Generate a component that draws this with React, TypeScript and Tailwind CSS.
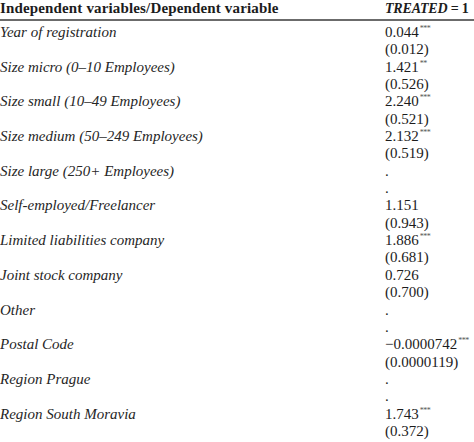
import React from 'react';

type Row = { label: string; coef: string; stars?: string; se?: string };

const rows: Row[] = [
  { label: 'Year of registration', coef: '0.044', stars: '***', se: '(0.012)' },
  { label: 'Size micro (0–10 Employees)', coef: '1.421', stars: '**', se: '(0.526)' },
  { label: 'Size small (10–49 Employees)', coef: '2.240', stars: '***', se: '(0.521)' },
  { label: 'Size medium (50–249 Employees)', coef: '2.132', stars: '***', se: '(0.519)' },
  { label: 'Size large (250+ Employees)', coef: '.', se: '.' },
  { label: 'Self-employed/Freelancer', coef: '1.151', se: '(0.943)' },
  { label: 'Limited liabilities company', coef: '1.886', stars: '***', se: '(0.681)' },
  { label: 'Joint stock company', coef: '0.726', se: '(0.700)' },
  { label: 'Other', coef: '.', se: '.' },
  { label: 'Postal Code', coef: '−0.0000742', stars: '***', se: '(0.0000119)' },
  { label: 'Region Prague', coef: '.', se: '.' },
  { label: 'Region South Moravia', coef: '1.743', stars: '***', se: '(0.372)' },
];

export default function App() {
  return (
    <div
      className="w-[474px] h-[442px] overflow-hidden bg-white text-[#1c1c1c]"
      style={{ fontFamily: '"Liberation Serif", "DejaVu Serif", serif' }}
    >
      {/* Header */}
      <div className="grid grid-cols-[385px_1fr] h-[19px] text-[15px] leading-[15px] font-bold pt-[1px] whitespace-nowrap">
        <div className="tracking-[0.15px]">Independent variables/Dependent variable</div>
        <div className="text-[14px] tracking-[-0.2px]">
          <span className="italic">TREATED</span> = 1
        </div>
      </div>
      <div className="h-[2px] bg-[#6b6b6b]" />

      {/* Body */}
      <div className="pt-[3px] text-[15px] leading-[17.35px] whitespace-nowrap">
        {rows.map((r) => (
          <div key={r.label} className="grid grid-cols-[385px_1fr]">
            <div className="italic text-[#262626]">{r.label}</div>
            <div>
              <div className="flex items-start">
                <span>{r.coef}</span>
                {r.stars && (
                  <span className="text-[8px] leading-[8px] mt-[1px] ml-[1px] text-[#555] tracking-[-0.5px]">
                    {r.stars}
                  </span>
                )}
              </div>
              <div>{r.se}</div>
            </div>
          </div>
        ))}
      </div>
    </div>
  );
}
